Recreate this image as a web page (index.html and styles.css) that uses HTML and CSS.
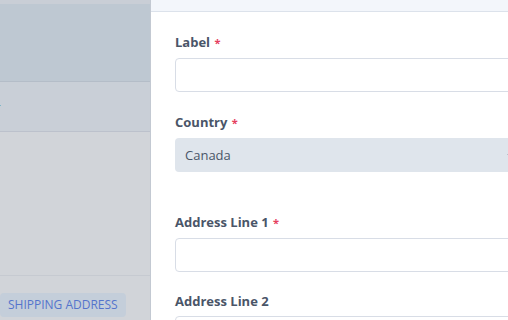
FILE: index.html
```html
<!DOCTYPE html>
<html>
<head>
<meta charset="utf-8">
<link rel="stylesheet" href="styles.css">
</head>
<body>
<div class="page">
  <aside class="backdrop">
    <div class="strip"></div>
    <div class="band band-a"></div>
    <div class="band band-b"><span class="dot"></span></div>
    <div class="band band-c"></div>
    <div class="band band-d"><span class="badge">SHIPPING ADDRESS</span></div>
  </aside>
  <main class="panel">
    <div class="panel-head"></div>
    <form class="form">
      <div class="field">
        <label class="label">Label <span class="req">*</span></label>
        <div class="input"></div>
      </div>
      <div class="field">
        <label class="label">Country <span class="req">*</span></label>
        <div class="select"><span>Canada</span>
          <svg class="chev" width="10" height="10" viewBox="0 0 10 10"><path d="M2 4l3 3 3-3" fill="none" stroke="#4a5568" stroke-width="1.4"/></svg>
        </div>
      </div>
      <div class="field field-gap">
        <label class="label">Address Line 1 <span class="req">*</span></label>
        <div class="input"></div>
      </div>
      <div class="field">
        <label class="label">Address Line 2</label>
        <div class="input"></div>
      </div>
    </form>
  </main>
</div>
</body>
</html>
```
FILE: styles.css
```css
html, body {
  margin: 0;
  padding: 0;
  width: 508px;
  height: 320px;
  overflow: hidden;
  font-family: "Open Sans", "Noto Sans", sans-serif;
}
.page {
  display: flex;
  height: 320px;
}
.backdrop {
  width: 150px;
  flex: none;
  display: flex;
  flex-direction: column;
  background: #d1d4d9;
}
.strip {
  height: 4px;
  background: #c9ced6;
}
.band-a {
  height: 77px;
  background: #bec8d2;
  border-bottom: 1px solid #b4bdc8;
}
.band-b {
  height: 49px;
  background: #c9cfd7;
  border-bottom: 1px solid #bcc1cc;
  position: relative;
}
.dot {
  position: absolute;
  left: 0;
  top: 23px;
  width: 1px;
  height: 1px;
  background: #7fb8c8;
}
.band-c {
  height: 143px;
  background: #d1d4d9;
  border-bottom: 1px solid #c6cad1;
}
.band-d {
  flex: 1;
  padding-top: 16px;
}
.badge {
  display: inline-block;
  height: 24px;
  line-height: 24px;
  padding: 0 8px;
  border-radius: 4px;
  background: #c4ceda;
  color: #5474cc;
  font-size: 12px;
}
.panel {
  flex: 1;
  background: #fff;
  border-left: 1px solid #c3c9d2;
  overflow: hidden;
}
.panel-head {
  height: 11px;
  background: #f3f6fb;
  border-bottom: 1px solid #dce2eb;
}
.form {
  padding: 20px 0 0 24px;
  width: 400px;
}
.field {
  margin-bottom: 20px;
}
.field-gap {
  margin-top: 40px;
  margin-bottom: 19px;
}
.label {
  display: block;
  font-size: 13px;
  font-weight: 700;
  line-height: 20px;
  color: #4a5568;
  margin-bottom: 5px;
}
.req {
  color: #e5405e;
  font-size: 11px;
  margin-left: 1px;
}
.input {
  height: 32px;
  border: 1px solid #d8dde6;
  border-radius: 4px;
  background: #fff;
}
.select {
  height: 34px;
  border-radius: 4px;
  background: #dfe5ec;
  display: flex;
  align-items: center;
  padding-left: 10px;
  font-size: 13px;
  color: #4a5568;
  position: relative;
}
.chev {
  position: absolute;
  left: 331px;
  top: 12px;
}
```
